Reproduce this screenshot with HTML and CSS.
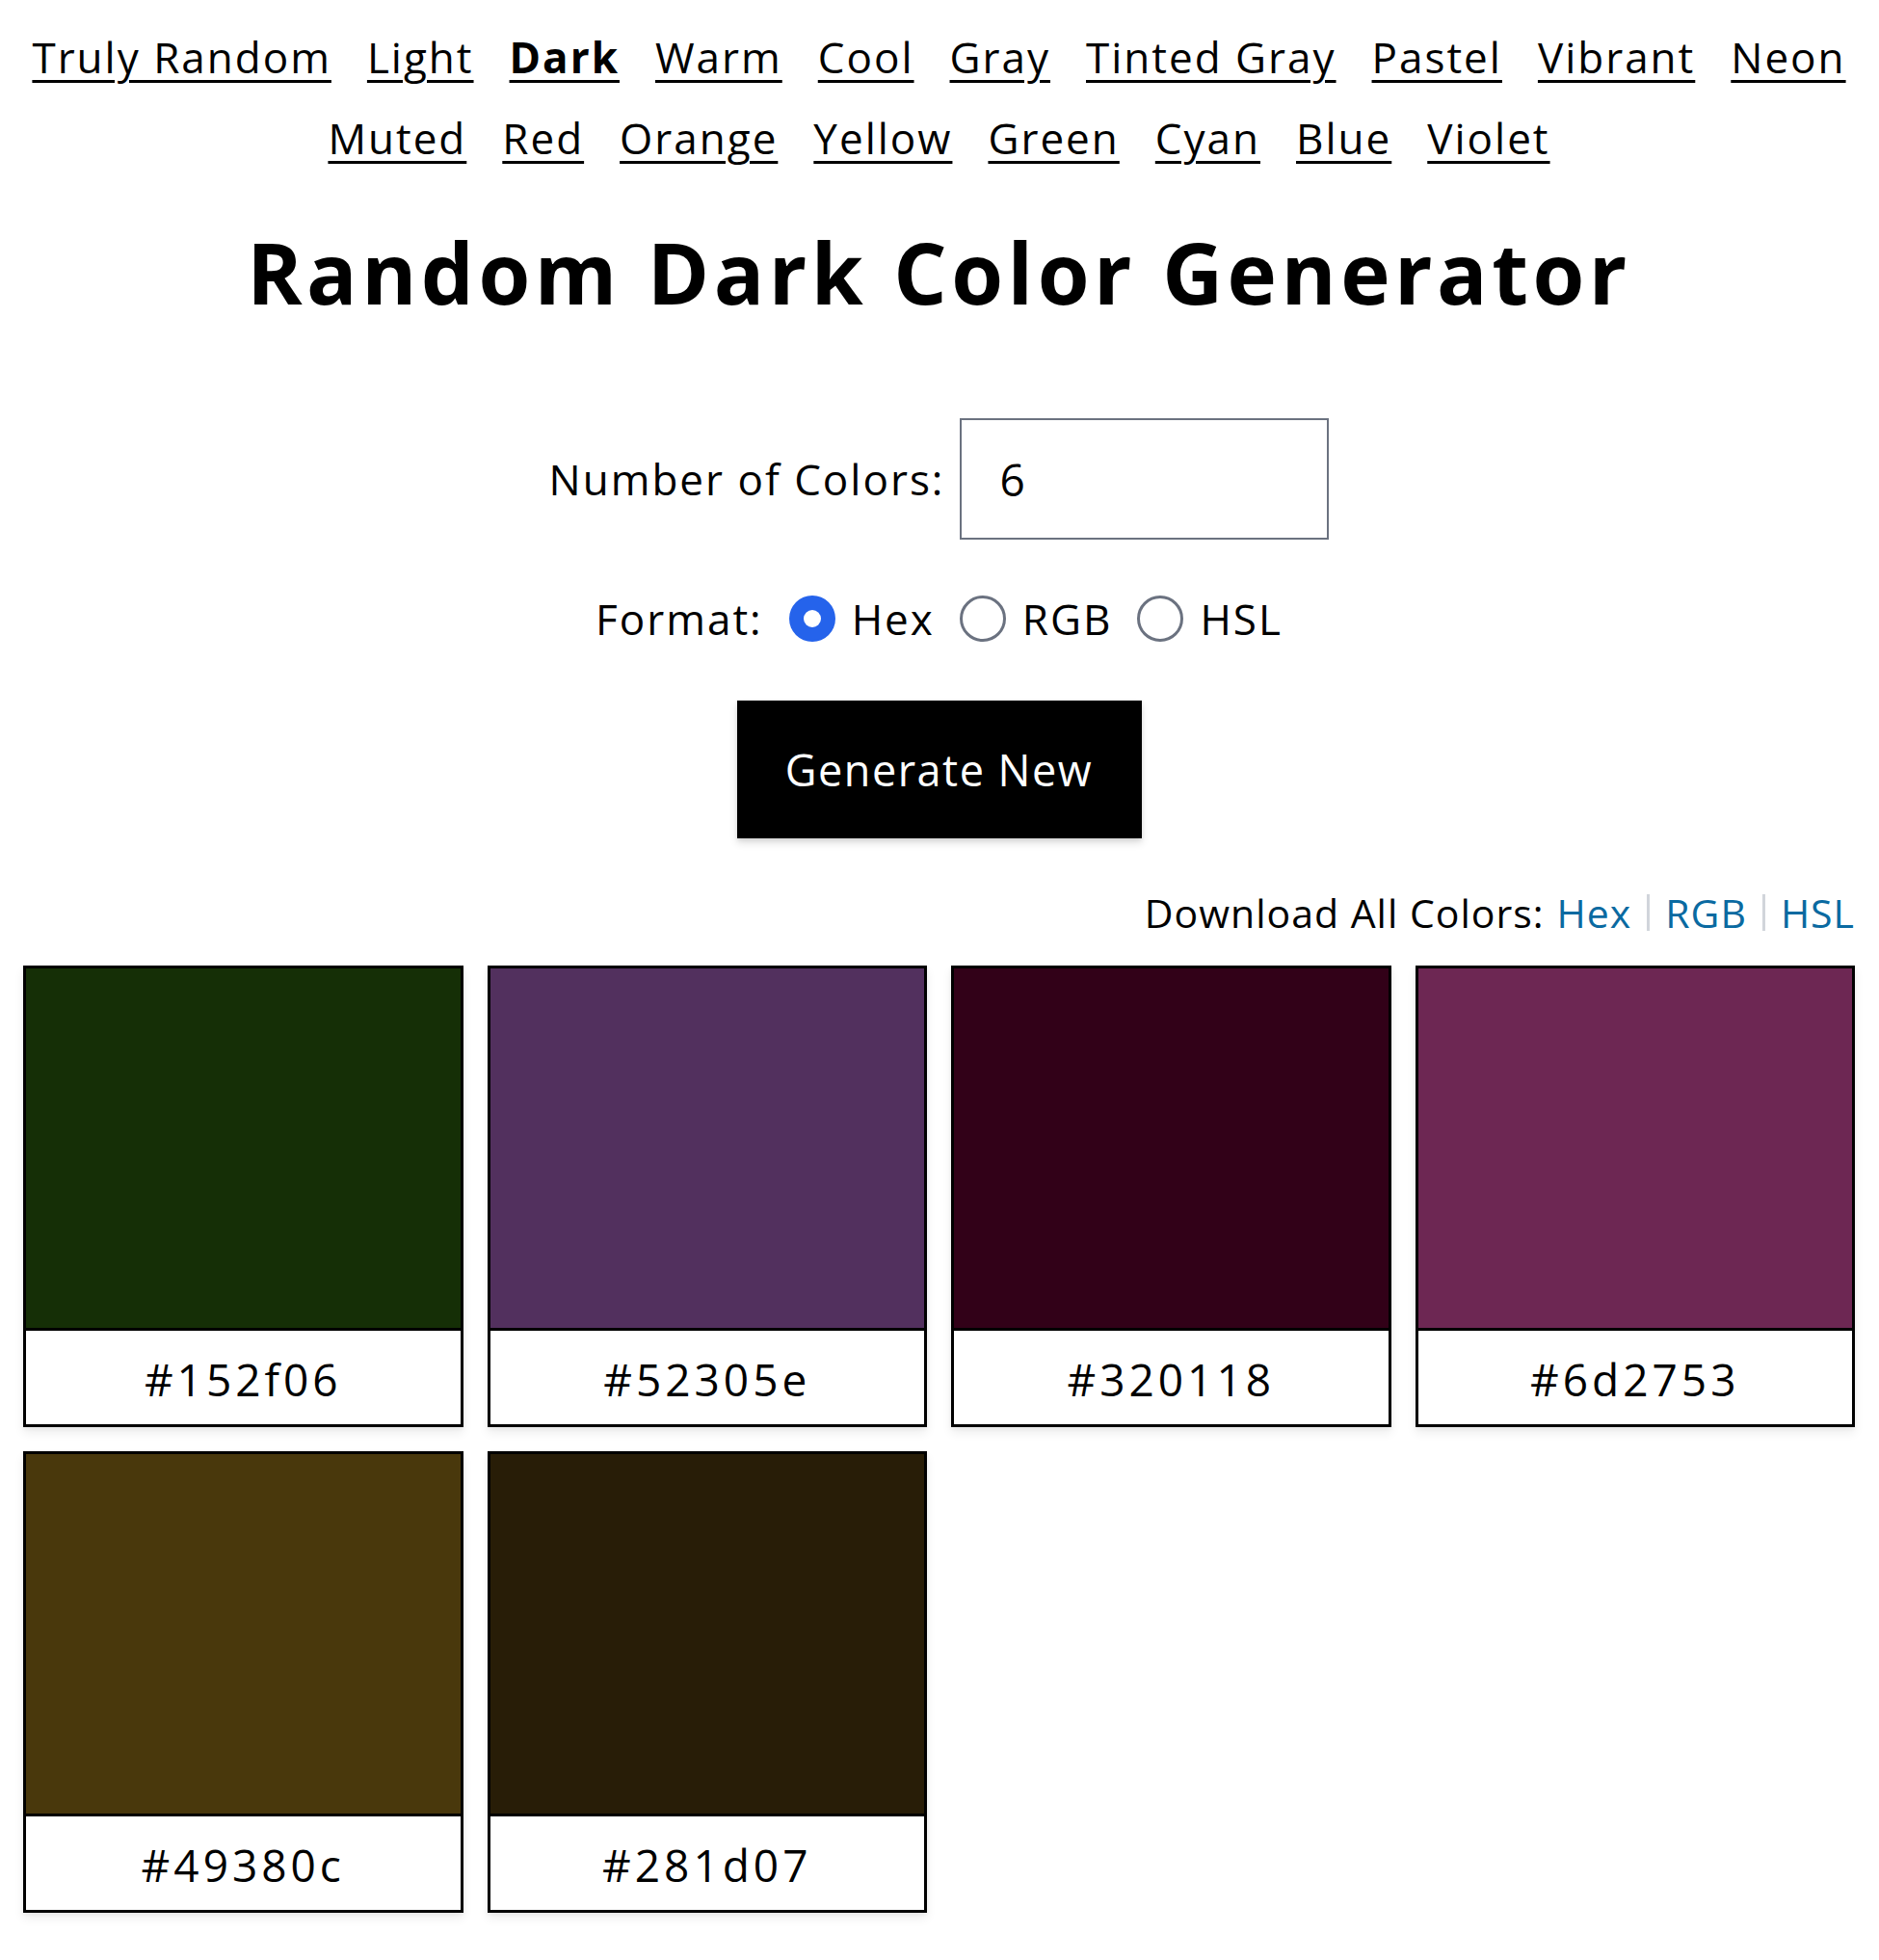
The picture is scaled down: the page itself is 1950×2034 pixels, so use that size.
FILE: index.html
```html
<!DOCTYPE html>
<html lang="en">
<head>
<meta charset="utf-8">
<title>Random Dark Color Generator</title>
<link rel="stylesheet" href="styles.css">
</head>
<body>
<div class="page">
  <nav class="nav">
    <a href="#">Truly Random</a>
    <a href="#">Light</a>
    <a href="#" class="active">Dark</a>
    <a href="#">Warm</a>
    <a href="#">Cool</a>
    <a href="#">Gray</a>
    <a href="#">Tinted Gray</a>
    <a href="#">Pastel</a>
    <a href="#">Vibrant</a>
    <a href="#">Neon</a>
    <a href="#">Muted</a>
    <a href="#">Red</a>
    <a href="#">Orange</a>
    <a href="#">Yellow</a>
    <a href="#">Green</a>
    <a href="#">Cyan</a>
    <a href="#">Blue</a>
    <a href="#">Violet</a>
  </nav>

  <h1 class="title">Random Dark Color Generator</h1>

  <div class="count-row">
    <label class="count-label" for="count">Number of Colors:</label>
    <input class="count-input" id="count" type="text" value="6">
  </div>

  <div class="format-row">
    <span class="format-label">Format:</span>
    <label class="option"><span class="radio checked"></span><span>Hex</span></label>
    <label class="option"><span class="radio"></span><span>RGB</span></label>
    <label class="option"><span class="radio"></span><span>HSL</span></label>
  </div>

  <div class="button-row">
    <button class="generate" type="button">Generate New</button>
  </div>

  <div class="download-row">
    <span>Download All Colors:</span>
    <a href="#" class="dl first">Hex</a><span class="sep"></span><a href="#" class="dl">RGB</a><span class="sep"></span><a href="#" class="dl">HSL</a>
  </div>

  <div class="grid">
    <div class="card"><div class="swatch" style="background:#152f06"></div><div class="code">#152f06</div></div>
    <div class="card"><div class="swatch" style="background:#52305e"></div><div class="code">#52305e</div></div>
    <div class="card"><div class="swatch" style="background:#320118"></div><div class="code">#320118</div></div>
    <div class="card"><div class="swatch" style="background:#6d2753"></div><div class="code">#6d2753</div></div>
    <div class="card"><div class="swatch" style="background:#49380c"></div><div class="code">#49380c</div></div>
    <div class="card"><div class="swatch" style="background:#281d07"></div><div class="code">#281d07</div></div>
  </div>
</div>
</body>
</html>
```

FILE: styles.css
```css
html, body {
  margin: 0;
  padding: 0;
  background: #ffffff;
}

body {
  font-family: "Open Sans", "Noto Sans", sans-serif;
  color: #000000;
}

.page {
  padding: 17px 25px 40px 24px;
}

.nav {
  display: flex;
  flex-wrap: wrap;
  justify-content: center;
  column-gap: 37px;
  font-size: 44px;
  line-height: 84px;
  letter-spacing: 2px;
}

.nav a {
  color: #000000;
  text-decoration: underline;
  text-decoration-thickness: 3px;
  text-underline-offset: 7px;
}

.nav a.active {
  font-weight: 700;
}

.title {
  margin: 45px 0 0;
  text-align: center;
  font-size: 87px;
  line-height: 104px;
  font-weight: 700;
  letter-spacing: 4.5px;
}

.count-row {
  margin-top: 100px;
  display: flex;
  justify-content: center;
  align-items: center;
  gap: 16px;
}

.count-label {
  font-size: 44px;
  letter-spacing: 2px;
}

.count-input {
  box-sizing: border-box;
  width: 383px;
  height: 126px;
  border: 2px solid #6b7280;
  border-radius: 0;
  padding: 0 0 0 39px;
  font-family: inherit;
  font-size: 46px;
  color: #000000;
  outline: none;
}

.format-row {
  margin-top: 58px;
  display: flex;
  justify-content: center;
  align-items: center;
  height: 48px;
  line-height: 48px;
  font-size: 44px;
  letter-spacing: 2px;
}

.format-label {
  margin-right: 27px;
}

.option {
  display: flex;
  align-items: center;
  gap: 17px;
  margin-right: 26px;
}

.option:last-child {
  margin-right: 0;
}

.radio {
  box-sizing: border-box;
  width: 48px;
  height: 48px;
  border-radius: 50%;
  border: 3px solid #6b7280;
  background: #ffffff;
  display: flex;
  align-items: center;
  justify-content: center;
}

.radio.checked {
  border: none;
  background: #2563eb;
}

.radio.checked::after {
  content: "";
  width: 18px;
  height: 18px;
  border-radius: 50%;
  background: #ffffff;
}

.button-row {
  margin-top: 61px;
  display: flex;
  justify-content: center;
}

.generate {
  width: 420px;
  height: 143px;
  border: none;
  background: #000000;
  color: #ffffff;
  font-family: inherit;
  font-size: 45px;
  letter-spacing: 1.5px;
  box-shadow: 0 5px 8px rgba(0, 0, 0, 0.12), 0 2px 4px rgba(0, 0, 0, 0.08);
  cursor: pointer;
}

.download-row {
  margin-top: 49px;
  display: flex;
  justify-content: flex-end;
  align-items: center;
  font-size: 41px;
  line-height: 56px;
  letter-spacing: 1px;
}

.download-row .dl {
  color: #0a6aa1;
  text-decoration: none;
}

.download-row .first {
  margin-left: 13px;
}

.sep {
  display: inline-block;
  width: 3px;
  height: 38px;
  background: #d1d5db;
  margin: 0 16px;
}

.grid {
  margin-top: 27px;
  display: grid;
  grid-template-columns: repeat(4, 1fr);
  gap: 25px;
}

.card {
  border: 3px solid #000000;
  background: #ffffff;
  box-shadow: 0 6px 10px rgba(0, 0, 0, 0.07), 0 2px 4px rgba(0, 0, 0, 0.05);
}

.swatch {
  height: 373px;
  border-bottom: 3px solid #000000;
}

.code {
  height: 97px;
  line-height: 100px;
  text-align: center;
  font-size: 46px;
  letter-spacing: 4px;
}
```
